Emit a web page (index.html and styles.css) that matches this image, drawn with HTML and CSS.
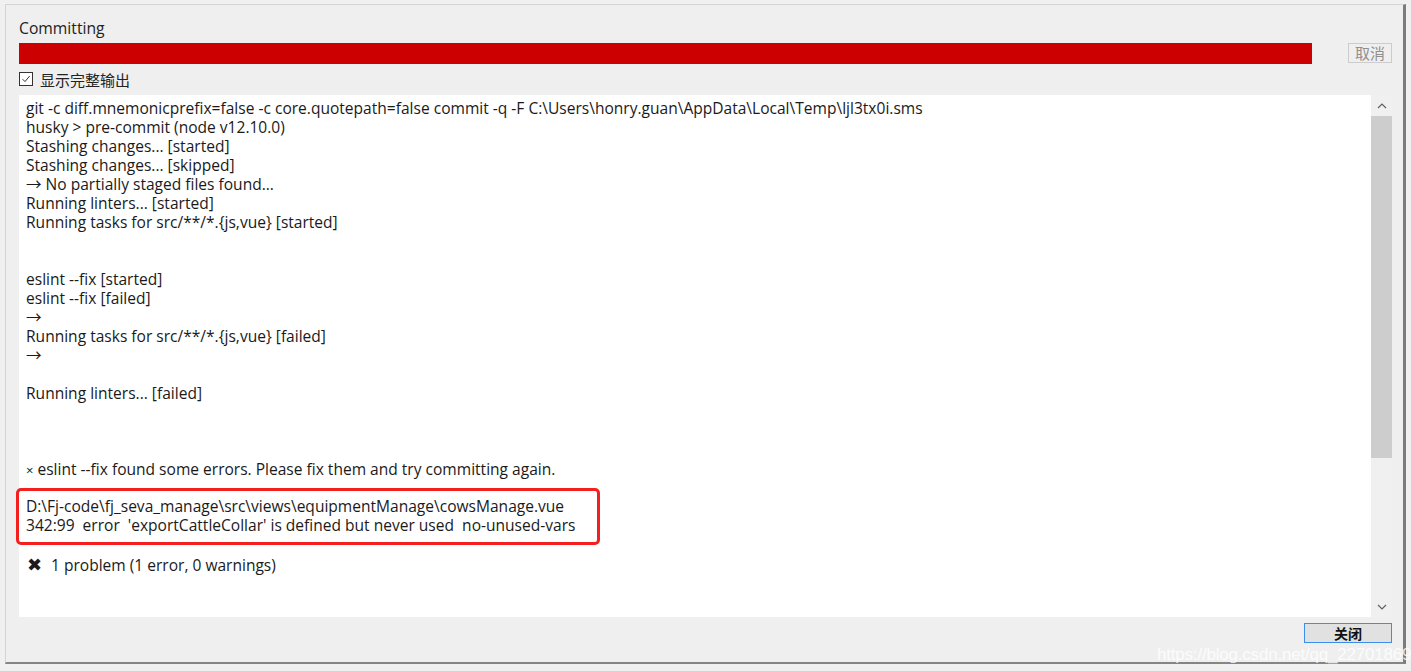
FILE: index.html
```html
<!DOCTYPE html>
<html>
<head>
    <title>Committing</title>
    <link rel="stylesheet" href="styles.css">
</head>
<body>
    <div class="dialog">
        <div class="title">Committing</div>
        <div class="progress-row">
            <div class="progress"></div>
            <button class="btn btn-disabled">取消</button>
        </div>
        <label class="check-row">
            <span class="checkbox">
                <svg width="14" height="14" viewBox="0 0 14 14"><path d="M3 7.2 L5.8 10 L11.2 3.6" fill="none" stroke="#222" stroke-width="1.1"/></svg>
            </span>
            <span>显示完整输出</span>
        </label>
        <div class="output-wrap">
            <div class="output">
                <div class="line">git -c diff.mnemonicprefix=false -c core.quotepath=false commit -q -F C:\Users\honry.guan\AppData\Local\Temp\ljl3tx0i.sms</div>
                <div class="line">husky &gt; pre-commit (node v12.10.0)</div>
                <div class="line">Stashing changes... [started]</div>
                <div class="line">Stashing changes... [skipped]</div>
                <div class="line">→ No partially staged files found...</div>
                <div class="line">Running linters... [started]</div>
                <div class="line">Running tasks for src/**/*.{js,vue} [started]</div>
                <div class="line"></div>
                <div class="line"></div>
                <div class="line">eslint --fix [started]</div>
                <div class="line">eslint --fix [failed]</div>
                <div class="line">→</div>
                <div class="line">Running tasks for src/**/*.{js,vue} [failed]</div>
                <div class="line">→</div>
                <div class="line"></div>
                <div class="line">Running linters... [failed]</div>
                <div class="line"></div>
                <div class="line"></div>
                <div class="line"></div>
                <div class="line"><span class="small-x">×</span> eslint --fix found some errors. Please fix them and try committing again.</div>
                <div class="highlight">
                    <div class="line">D:\Fj-code\fj_seva_manage\src\views\equipmentManage\cowsManage.vue</div>
                    <div class="line">342:99&nbsp; error&nbsp; 'exportCattleCollar' is defined but never used&nbsp; no-unused-vars</div>
                </div>
                <div class="line problem"><span class="big-x">✖</span>1 problem (1 error, 0 warnings)</div>
            </div>
            <div class="scrollbar">
                <div class="arrow">
                    <svg width="10" height="6" viewBox="0 0 10 6"><path d="M1 5 L5 1 L9 5" fill="none" stroke="#606060" stroke-width="1.2"/></svg>
                </div>
                <div class="track">
                    <div class="thumb"></div>
                </div>
                <div class="arrow">
                    <svg width="10" height="6" viewBox="0 0 10 6"><path d="M1 1 L5 5 L9 1" fill="none" stroke="#606060" stroke-width="1.2"/></svg>
                </div>
            </div>
        </div>
        <div class="footer">
            <button class="btn btn-close">关闭</button>
        </div>
    </div>
    <div class="watermark">https://blog.csdn.net/qq_22701869</div>
</body>
</html>
```

FILE: styles.css
```css
* { box-sizing: border-box; }
body {
    margin: 0;
    background: #f0f0f0;
    font-family: "Open Sans", "Noto Sans CJK SC", sans-serif;
    color: #1e1e1e;
    height: 671px;
    overflow: hidden;
    position: relative;
}
.dialog {
    margin: 4px 0 0 5px;
    width: 1401px;
    height: 660px;
    padding: 13px 11px 0 13px;
    border-left: 1px solid #d4d4d4;
    border-top: 1px solid #d4d4d4;
    border-right: 3px solid #7c7c7c;
    border-bottom: 2px solid #858585;
    background: #efefef;
    display: flex;
    flex-direction: column;
}
.title {
    font-size: 15.7px;
    line-height: 20px;
    height: 20px;
    color: #222;
}
.progress-row {
    display: flex;
    align-items: flex-start;
    gap: 36px;
    margin-top: 5px;
}
.progress {
    flex: 1;
    height: 21px;
    background: #cc0000;
}
.btn {
    font-family: "Noto Sans CJK SC", sans-serif;
    font-size: 14px;
    line-height: 18px;
    padding: 0;
    margin: 0;
}
.btn-disabled {
    width: 44px;
    height: 20px;
    border: 1px solid #cccccc;
    background: #efefef;
    color: #8f8f8f;
    font-size: 15px;
}
.check-row {
    display: flex;
    align-items: center;
    gap: 7px;
    margin-top: 7px;
    height: 16px;
    font-family: "Noto Sans CJK SC", sans-serif;
    font-size: 15px;
    color: #222;
}
.checkbox {
    width: 14px;
    height: 14px;
    border: 1px solid #333;
    background: #fff;
    display: flex;
    align-items: center;
    justify-content: center;
}
.output-wrap {
    display: flex;
    margin-top: 8px;
    height: 522px;
}
.output {
    flex: 1;
    background: #fff;
    padding: 4px 0 0 7px;
    font-size: 15.55px;
    color: #1a1a1a;
}
.line {
    height: 19px;
    line-height: 19px;
    white-space: pre;
}
.small-x {
    font-size: 13px;
}
.highlight {
    margin: 9px 0 10px -10px;
    width: 584px;
    padding: 6px 7px 7px;
    border: 3px solid #f42020;
    border-radius: 5px;
}
.big-x {
    display: inline-block;
    width: 25px;
    padding-left: 1px;
    font-size: 18px;
    color: #1a1a1a;
}
.scrollbar {
    width: 21px;
    background: #f0f0f0;
    display: flex;
    flex-direction: column;
}
.arrow {
    height: 21px;
    display: flex;
    align-items: center;
    justify-content: center;
}
.track {
    flex: 1;
}
.thumb {
    height: 342px;
    background: #cdcdcd;
}
.footer {
    display: flex;
    justify-content: flex-end;
    margin-top: 6px;
}
.btn-close {
    width: 88px;
    height: 20px;
    border: 1px solid #3c8fe6;
    background: #e1e1e1;
    color: #111;
    font-weight: bold;
}
.watermark {
    position: absolute;
    left: 1157px;
    top: 645px;
    font-family: "Liberation Sans", Arial, sans-serif;
    font-size: 17px;
    color: rgba(255, 255, 255, 0.8);
    letter-spacing: -0.2px;
}
```
